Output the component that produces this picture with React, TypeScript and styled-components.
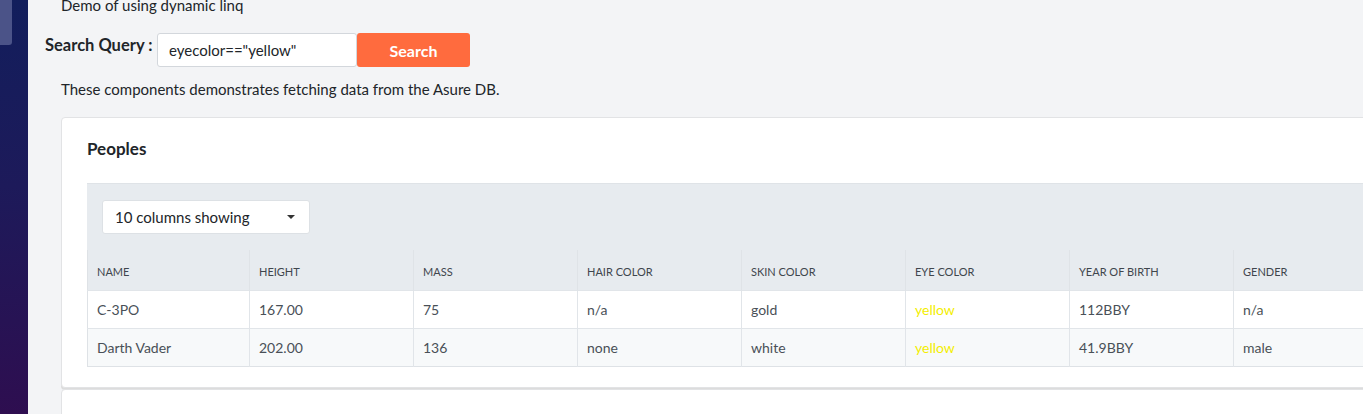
import { createGlobalStyle, styled } from 'styled-components';

const GlobalStyle = createGlobalStyle`
  html, body {
    margin: 0;
    padding: 0;
    height: 100%;
    overflow: hidden;
  }
  body {
    font-family: Lato, 'Noto Sans', sans-serif;
    color: #212529;
  }
`;

const Shell = styled.div`
  display: flex;
  height: 414px;
  overflow: hidden;
`;

const Sidebar = styled.aside`
  position: relative;
  flex: 0 0 28px;
  background: linear-gradient(180deg, #121e5c 0%, #1d1a5a 45%, #2e0e50 100%);
`;

const ScrollThumb = styled.div`
  position: absolute;
  top: 0;
  left: 0;
  width: 12px;
  height: 45px;
  border-radius: 0 0 3px 0;
  background: #4b5388;
`;

const Main = styled.main`
  flex: 1;
  min-width: 0;
  background: #f3f4f6;
  overflow: hidden;
`;

const Content = styled.div`
  margin-top: -6px;
  padding-left: 17px;
  display: flex;
  flex-direction: column;
`;

const Intro = styled.p`
  margin: 0 0 0 16px;
  font-size: 15px;
  line-height: 22px;
`;

const SearchRow = styled.form`
  display: flex;
  align-items: flex-start;
  margin-top: 17px;
`;

const SearchLabel = styled.label`
  box-sizing: border-box;
  width: 112px;
  font-size: 16.5px;
  font-weight: 700;
  line-height: 22px;
  margin-top: 1px;
  white-space: nowrap;
`;

const QueryInput = styled.input`
  box-sizing: border-box;
  width: 200px;
  height: 34px;
  padding: 0 11px;
  border: 1px solid #d3d7dc;
  border-radius: 3px;
  background: #fff;
  font-family: inherit;
  font-size: 15px;
  color: #212529;
  outline: none;
`;

const SearchButton = styled.button`
  box-sizing: border-box;
  width: 113px;
  height: 34px;
  border: none;
  border-radius: 3px;
  background: #ff6b3e;
  color: #fff;
  font-family: inherit;
  font-size: 16px;
  font-weight: 700;
  cursor: pointer;
`;

const Description = styled.p`
  margin: 11px 0 0 16px;
  font-size: 15px;
  line-height: 22px;
`;

const Card = styled.section`
  box-sizing: border-box;
  width: 1800px;
  margin: 17px 0 0 16px;
  padding: 20px 25px 20px;
  background: #fff;
  border: 1px solid #e2e3e5;
  border-radius: 4px;
  box-shadow: 0 2px 0 #dcdcdc;
  & + & {
    margin-top: 1px;
  }
`;

const CardTitle = styled.h3`
  margin: 0 0 23px;
  font-size: 17px;
  font-weight: 700;
  line-height: 22px;
  color: #212529;
`;

const Toolbar = styled.div`
  display: flex;
  align-items: center;
  padding: 16px 15px 16px;
  background: #e7ebef;
  border-top: 1px solid #dfe3e7;
`;

const ColumnPicker = styled.button`
  box-sizing: border-box;
  display: flex;
  align-items: center;
  justify-content: space-between;
  width: 208px;
  height: 34px;
  padding: 0 12px;
  background: #fff;
  border: 1px solid #dde1e5;
  border-radius: 3px;
  font-family: inherit;
  font-size: 15px;
  color: #212529;
`;

const Caret = styled.span`
  width: 0;
  height: 0;
  border-left: 4px solid transparent;
  border-right: 4px solid transparent;
  border-top: 4px solid #333;
  margin-right: 2px;
`;

const Table = styled.table`
  border-collapse: collapse;
  table-layout: fixed;
  width: 1638px;
  font-size: 14px;
  color: #495057;
  border-left: 1px solid #dee2e6;
  border-bottom: 1px solid #dee2e6;
`;

const HeadCell = styled.th`
  width: 164px;
  height: 40px;
  box-sizing: border-box;
  padding: 3px 9px 0;
  text-align: left;
  font-size: 11px;
  font-weight: 400;
  color: #3f464d;
  background: #e7ebef;
  border-right: 1px solid #dfe3e7;
  &:first-child {
    width: 162px;
  }
`;

const Row = styled.tr<{ $striped?: boolean }>`
  background: ${(p) => (p.$striped ? '#f7f9fa' : '#fff')};
`;

const Cell = styled.td<{ $tint?: string }>`
  height: 38px;
  box-sizing: border-box;
  padding: 0 9px;
  color: ${(p) => p.$tint ?? '#495057'};
  border-right: 1px solid #e1e5e9;
  border-top: 1px solid #e1e5e9;
  white-space: nowrap;
`;

const columns = [
  'Name',
  'Height',
  'Mass',
  'Hair color',
  'Skin color',
  'Eye color',
  'Year of birth',
  'Gender',
  'Homeworld',
  'Species',
];

const people = [
  ['C-3PO', '167.00', '75', 'n/a', 'gold', 'yellow', '112BBY', 'n/a', 'Tatooine', 'Droid'],
  ['Darth Vader', '202.00', '136', 'none', 'white', 'yellow', '41.9BBY', 'male', 'Tatooine', 'Human'],
];

const App = () => (
  <>
    <GlobalStyle />
    <Shell>
      <Sidebar>
        <ScrollThumb />
      </Sidebar>
      <Main>
        <Content>
          <Intro>Demo of using dynamic linq</Intro>
          <SearchRow onSubmit={(e) => e.preventDefault()}>
            <SearchLabel htmlFor="query">Search Query :</SearchLabel>
            <QueryInput id="query" type="text" defaultValue='eyecolor=="yellow"' />
            <SearchButton type="submit">Search</SearchButton>
          </SearchRow>
          <Description>These components demonstrates fetching data from the Asure DB.</Description>
          <Card>
            <CardTitle>Peoples</CardTitle>
            <Toolbar>
              <ColumnPicker type="button">
                10 columns showing
                <Caret />
              </ColumnPicker>
            </Toolbar>
            <Table>
              <thead>
                <tr>
                  {columns.map((c) => (
                    <HeadCell key={c}>{c.toUpperCase()}</HeadCell>
                  ))}
                </tr>
              </thead>
              <tbody>
                {people.map((person, i) => (
                  <Row key={person[0]} $striped={i % 2 === 1}>
                    {person.map((v, j) => (
                      <Cell key={j} $tint={j === 5 ? '#f3ee00' : undefined}>
                        {v}
                      </Cell>
                    ))}
                  </Row>
                ))}
              </tbody>
            </Table>
          </Card>
          <Card>
            <CardTitle>Species</CardTitle>
          </Card>
        </Content>
      </Main>
    </Shell>
  </>
);

export default App;
